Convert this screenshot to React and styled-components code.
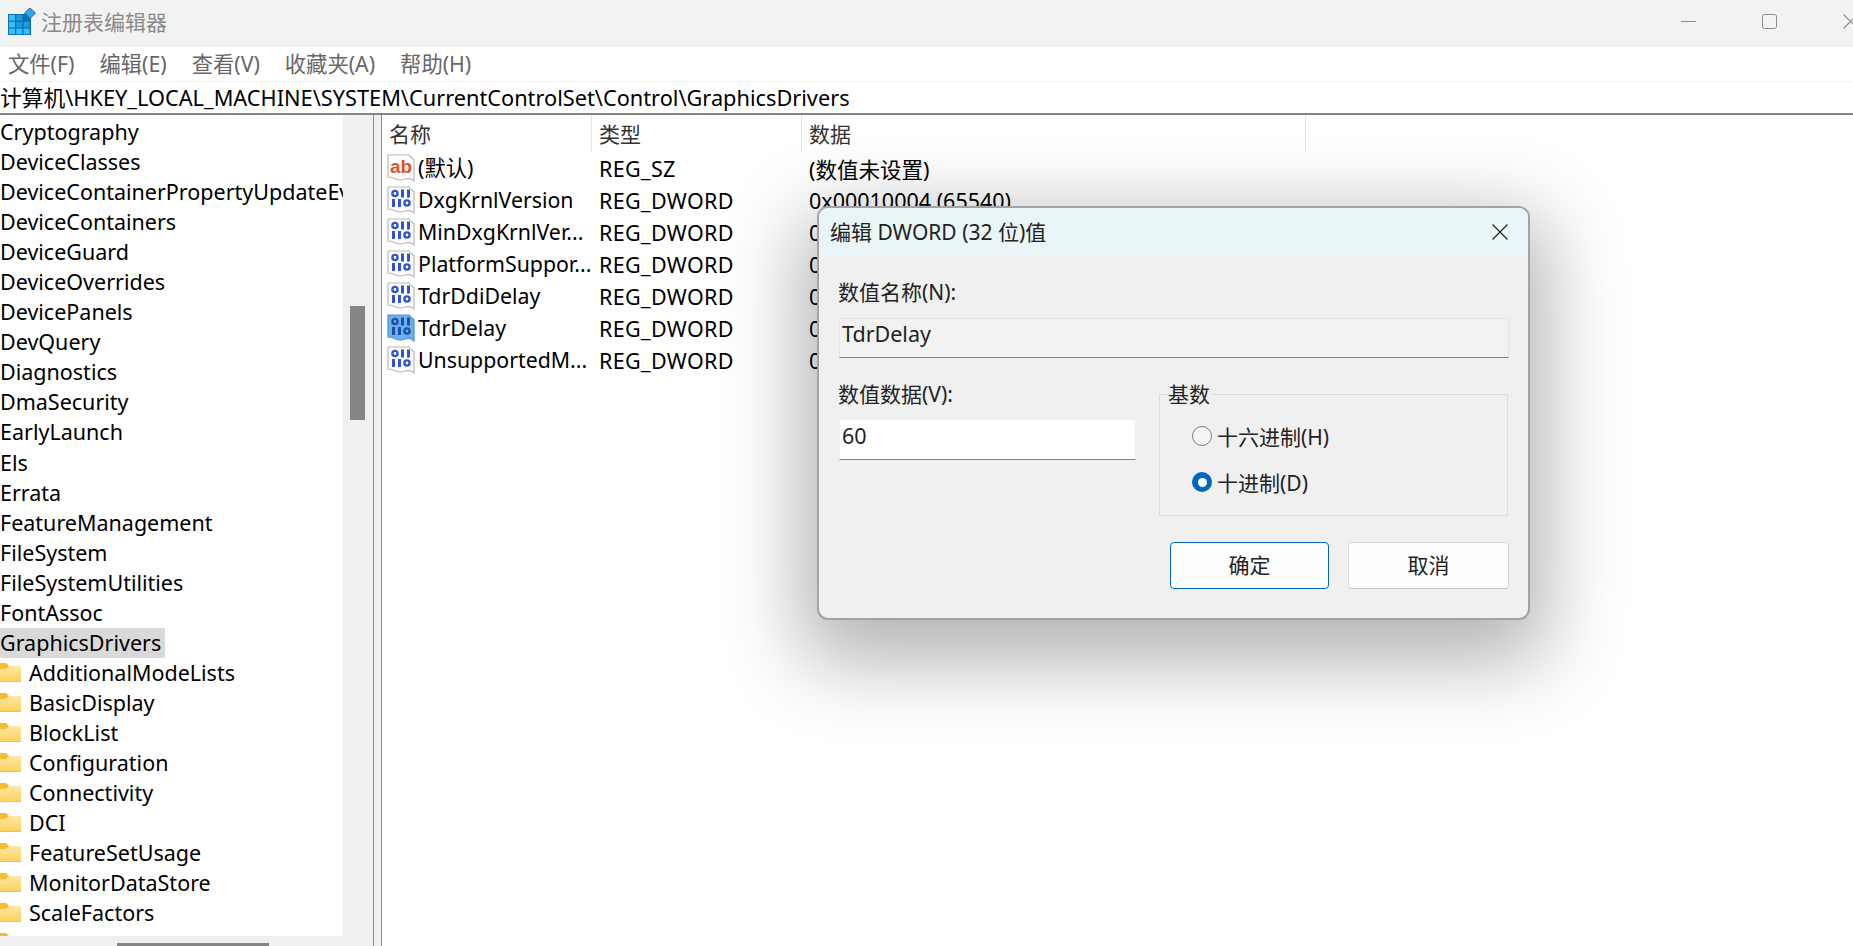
import React from 'react';
import styled, { createGlobalStyle } from 'styled-components';

const UI_FONT = `"Noto Sans", "Noto Sans CJK SC", sans-serif`;

const GlobalStyle = createGlobalStyle`
  html, body {
    margin: 0;
    padding: 0;
    height: 100%;
    overflow: hidden;
    background: #fff;
  }
  #root {
    height: 100%;
  }
`;

const Page = styled.div`
  position: relative;
  display: flex;
  flex-direction: column;
  height: 946px;
  overflow: hidden;
  font-family: ${UI_FONT};
  font-size: 21.5px;
  color: #000;
`;

const TitleBar = styled.div`
  display: flex;
  align-items: center;
  height: 47px;
  flex: none;
  box-sizing: border-box;
  padding: 0 0 5px 8px;
  background: #f2f2f2;
  color: #8a8a8a;
  font-size: 21px;
`;

const AppName = styled.span`
  margin-left: 5px;
  flex: 1;
`;

const WindowButtons = styled.div`
  display: flex;
  align-items: center;
  gap: 66px;
  margin-right: -5px;
`;

const MenuBar = styled.div`
  display: flex;
  align-items: center;
  height: 31px;
  flex: none;
  padding: 0 0 3px 8px;
  box-sizing: content-box;
  gap: 25px;
  margin-bottom: -1px;
  background: #fff;
  border-bottom: 2px solid #f0f0f0;
  color: #666;
  font-size: 21.3px;
`;

const AddressBar = styled.div`
  display: flex;
  align-items: center;
  height: 33px;
  flex: none;
  padding-bottom: 2px;
  box-sizing: border-box;
  background: #fff;
  border-bottom: 2px solid #858585;
  font-size: 21.75px;
  white-space: nowrap;
`;

const Main = styled.div`
  display: flex;
  flex: 1;
  min-height: 0;
`;

const TreePane = styled.div`
  display: flex;
  flex-direction: column;
  width: 343px;
  flex: none;
`;

const TreeList = styled.div`
  flex: 1;
  min-height: 0;
  overflow: hidden;
  padding-top: 2px;
`;

const TreeRow = styled.div`
  display: flex;
  align-items: center;
  width: fit-content;
  height: 30.05px;
  gap: 8px;
  line-height: 28px;
  white-space: nowrap;
  background: ${(p) => (p.$selected ? '#d9d9d9' : 'transparent')};
  border-radius: 0 2px 2px 0;
  padding-right: ${(p) => (p.$selected ? '4px' : '0')};
`;

const HorizontalBar = styled.div`
  display: flex;
  align-items: flex-end;
  height: 10px;
  flex: none;
  background: #f0f0f0;
`;

const HorizontalThumb = styled.div`
  width: 152px;
  height: 3px;
  margin-left: 117px;
  background: #858585;
`;

const VerticalBar = styled.div`
  width: 30px;
  flex: none;
  background: #f0f0f0;
`;

const VerticalThumb = styled.div`
  width: 15px;
  height: 114px;
  margin: 191px 0 0 7px;
  background: #858585;
`;

const Splitter = styled.div`
  width: 7px;
  flex: none;
  background: #f0f0f0;
  border-left: 1px solid #8c8c8c;
  border-right: 1px solid #8c8c8c;
`;

const ValuePane = styled.div`
  flex: 1;
  min-width: 0;
  background: #fff;
`;

const ValueHeader = styled.div`
  display: flex;
  height: 37px;
`;

const HeaderCell = styled.div`
  display: flex;
  align-items: center;
  width: ${(p) => p.$width}px;
  padding: 0 0 1px 7px;
  box-sizing: border-box;
  border-right: 1px solid #e5e5e5;
  color: #333;
  font-size: 21px;
`;

const ValueRow = styled.div`
  display: flex;
  align-items: center;
  height: 32px;
  white-space: nowrap;
`;

const NameCell = styled.div`
  display: flex;
  align-items: center;
  width: 210px;
  gap: 3px;
  padding-left: 5px;
  box-sizing: border-box;
  font-size: 21.3px;
  line-height: 28px;
`;

const DataCell = styled.div`
  width: ${(p) => p.$width}px;
  padding-left: 7px;
  box-sizing: border-box;
  letter-spacing: ${(p) => (p.$spaced ? '0.35px' : '0')};
`;

const Dialog = styled.div`
  position: absolute;
  left: 817px;
  top: 206px;
  width: 713px;
  height: 414px;
  box-sizing: border-box;
  background: #f0f0f0;
  border: 2px solid #a3a3a3;
  border-radius: 11px;
  box-shadow: 0 26px 80px 16px rgba(0, 0, 0, 0.3);
  overflow: hidden;
`;

const DialogTitle = styled.div`
  display: flex;
  align-items: center;
  justify-content: space-between;
  height: 50px;
  box-sizing: border-box;
  padding: 0 20px 2px 11px;
  background: #e9f5f6;
  color: #222;
  font-size: 21px;
`;

const TitleText = styled.span`
  margin-top: -3px;
`;

const DialogBody = styled.div`
  padding: 21px 19px 0 19px;
`;

const FieldLabel = styled.div`
  height: 28px;
  line-height: 26px;
  color: #222;
  font-size: 21px;
`;

const TextBox = styled.div`
  height: ${(p) => (p.$readOnly ? '40px' : '41px')};
  box-sizing: border-box;
  margin: ${(p) => (p.$readOnly ? '11px' : '10px')} 0 0 1px;
  padding-left: 2px;
  line-height: ${(p) => (p.$readOnly ? '29px' : '31px')};
  color: #222;
  background: ${(p) => (p.$readOnly ? '#f2f2f2' : '#fff')};
  border: 1px solid ${(p) => (p.$readOnly ? '#e4e4e4' : '#f2f2f2')};
  border-bottom: 1px solid #808080;
`;

const FieldColumns = styled.div`
  display: grid;
  grid-template-columns: 298px 349px;
  column-gap: 23px;
  margin-top: 23px;
`;

const GroupBox = styled.div`
  position: relative;
  height: 122px;
  box-sizing: border-box;
  margin-top: 13px;
  padding: 18px 0 0 31px;
  border: 1px solid #dcdcdc;
`;

const GroupLegend = styled.span`
  position: absolute;
  left: 8px;
  top: -14px;
  height: 28px;
  line-height: 26px;
  padding-right: 2px;
  background: #f0f0f0;
  color: #222;
  font-size: 21px;
`;

const RadioRow = styled.div`
  display: flex;
  align-items: center;
  height: 46px;
  gap: 5px;
  color: #222;
  font-size: 21px;
`;

const RadioMark = styled.span`
  display: flex;
  align-items: center;
  justify-content: center;
  width: 20px;
  height: 20px;
  margin-left: 1px;
  box-sizing: border-box;
  border-radius: 50%;
  background: ${(p) => (p.$checked ? '#0067c0' : '#f4f4f4')};
  border: ${(p) => (p.$checked ? 'none' : '1.5px solid #7f7f7f')};
  &::after {
    content: '';
    display: ${(p) => (p.$checked ? 'block' : 'none')};
    width: 9px;
    height: 9px;
    border-radius: 50%;
    background: #fff;
  }
`;

const ButtonRow = styled.div`
  display: flex;
  justify-content: flex-end;
  gap: 19px;
  margin-top: 26px;
`;

const DialogButton = styled.button`
  width: ${(p) => p.$width}px;
  height: 47px;
  padding: 0 0 3px;
  background: #fdfdfd;
  border: 1px solid ${(p) => (p.$primary ? '#0067c0' : '#dadada')};
  border-bottom-color: ${(p) => (p.$primary ? '#0067c0' : '#c4c4c4')};
  border-radius: 4px;
  color: #222;
  font-family: inherit;
  font-size: 21px;
`;

const AppIcon = () => (
  <svg width="28" height="28" viewBox="0 0 28 28">
    <rect x="0" y="7" width="23" height="21" fill="#0b6fb8" />
    {[0, 1, 2].map((r) =>
      [0, 1, 2].map((c) => (
        <rect
          key={`${r}${c}`}
          x={1 + c * 7.3}
          y={8 + r * 6.8}
          width="6"
          height="5.6"
          fill={r === 2 || c === 0 ? '#35c1f5' : r === 0 && c === 2 ? '#0b6fb8' : '#1a9be0'}
        />
      ))
    )}
    <path d="M22 1 L27.5 6 L22 11.5 L16.5 6 Z" fill="#2fa7e4" stroke="#0b6fb8" strokeWidth="1" />
  </svg>
);

const MinimizeIcon = () => (
  <svg width="15" height="15" viewBox="0 0 15 15">
    <path d="M0 7.5H15" stroke="#8a8a8a" strokeWidth="1" />
  </svg>
);

const MaximizeIcon = () => (
  <svg width="15" height="15" viewBox="0 0 15 15">
    <rect x="0.5" y="0.5" width="14" height="14" rx="2" fill="none" stroke="#8a8a8a" strokeWidth="1" />
  </svg>
);

const CloseIcon = ({ size = 15, color = '#8a8a8a' }) => (
  <svg width={size} height={size} viewBox="0 0 15 15">
    <path d="M0.5 0.5L14.5 14.5M14.5 0.5L0.5 14.5" stroke={color} strokeWidth="1.1" />
  </svg>
);

const FolderIcon = () => (
  <svg width="21" height="30" viewBox="0 0 21 30" style={{ flex: 'none' }}>
    <defs>
      <linearGradient id="folderFill" x1="0" y1="0" x2="0" y2="1">
        <stop offset="0" stopColor="#ffedb5" />
        <stop offset="1" stopColor="#fbd05a" />
      </linearGradient>
    </defs>
    <path d="M0 5H6L9 8H21V24H0Z" fill="url(#folderFill)" />
    <path d="M0 5H6L9 8L6 11H0Z" fill="#f6bd34" />
    <path d="M0 23.5H21V24H0Z" fill="#e9b13c" />
  </svg>
);

// page with the turned corner and the wavy bottom edge used by both value icons
const PageShape = ({ selected }) => (
  <path
    d="M1 1H22L27 6V27Q23 23 18 25T9 25T1 23Z"
    fill={selected ? '#6cb0ea' : '#fdfdfd'}
    stroke={selected ? '#4a94d8' : '#b9b9b9'}
    strokeWidth="1.2"
  />
);

const StringIcon = () => (
  <svg width="28" height="28" viewBox="0 0 28 28" style={{ flex: 'none' }}>
    <PageShape />
    <text x="3" y="19" fontFamily="Liberation Sans, sans-serif" fontSize="19" fontWeight="700" fill="#e0512c">
      ab
    </text>
  </svg>
);

const BinaryIcon = ({ selected }) => {
  const ink = selected ? '#1d4fa8' : '#2f52d8';
  return (
    <svg width="28" height="28" viewBox="0 0 28 28" style={{ flex: 'none' }}>
      <PageShape selected={selected} />
      <ellipse cx="8" cy="7.5" rx="2.6" ry="2.6" fill="none" stroke={ink} strokeWidth="2.4" />
      <rect x="14" y="3.5" width="3" height="8" fill={ink} />
      <rect x="20" y="3.5" width="3" height="8" fill={ink} />
      <rect x="5" y="13" width="3" height="8" fill={ink} />
      <rect x="11" y="13" width="3" height="8" fill={ink} />
      <ellipse cx="20" cy="17" rx="2.6" ry="2.6" fill="none" stroke={ink} strokeWidth="2.4" />
    </svg>
  );
};

const MENU_ITEMS = ['文件(F)', '编辑(E)', '查看(V)', '收藏夹(A)', '帮助(H)'];

const TREE_KEYS = [
  'Cryptography',
  'DeviceClasses',
  'DeviceContainerPropertyUpdateEvents',
  'DeviceContainers',
  'DeviceGuard',
  'DeviceOverrides',
  'DevicePanels',
  'DevQuery',
  'Diagnostics',
  'DmaSecurity',
  'EarlyLaunch',
  'Els',
  'Errata',
  'FeatureManagement',
  'FileSystem',
  'FileSystemUtilities',
  'FontAssoc',
];

const SUB_KEYS = [
  'AdditionalModeLists',
  'BasicDisplay',
  'BlockList',
  'Configuration',
  'Connectivity',
  'DCI',
  'FeatureSetUsage',
  'MonitorDataStore',
  'ScaleFactors',
  '',
];

const VALUES = [
  { name: '(默认)', type: 'REG_SZ', data: '(数值未设置)', string: true },
  { name: 'DxgKrnlVersion', type: 'REG_DWORD', data: '0x00010004 (65540)' },
  { name: 'MinDxgKrnlVer...', type: 'REG_DWORD', data: '0' },
  { name: 'PlatformSuppor...', type: 'REG_DWORD', data: '0' },
  { name: 'TdrDdiDelay', type: 'REG_DWORD', data: '0' },
  { name: 'TdrDelay', type: 'REG_DWORD', data: '0', selected: true },
  { name: 'UnsupportedM...', type: 'REG_DWORD', data: '0' },
];

const App = () => (
  <Page>
    <GlobalStyle />
    <TitleBar>
      <AppIcon />
      <AppName>注册表编辑器</AppName>
      <WindowButtons>
        <MinimizeIcon />
        <MaximizeIcon />
        <CloseIcon />
      </WindowButtons>
    </TitleBar>

    <MenuBar>
      {MENU_ITEMS.map((item) => (
        <span key={item}>{item}</span>
      ))}
    </MenuBar>

    <AddressBar>计算机\HKEY_LOCAL_MACHINE\SYSTEM\CurrentControlSet\Control\GraphicsDrivers</AddressBar>

    <Main>
      <TreePane>
        <TreeList>
          {TREE_KEYS.map((key) => (
            <TreeRow key={key}>{key}</TreeRow>
          ))}
          <TreeRow $selected>GraphicsDrivers</TreeRow>
          {SUB_KEYS.map((key) => (
            <TreeRow key={key || 'clipped'}>
              <FolderIcon />
              {key}
            </TreeRow>
          ))}
        </TreeList>
        <HorizontalBar>
          <HorizontalThumb />
        </HorizontalBar>
      </TreePane>
      <VerticalBar>
        <VerticalThumb />
      </VerticalBar>
      <Splitter />

      <ValuePane>
        <ValueHeader>
          <HeaderCell $width={210}>名称</HeaderCell>
          <HeaderCell $width={210}>类型</HeaderCell>
          <HeaderCell $width={504}>数据</HeaderCell>
        </ValueHeader>
        {VALUES.map((value) => (
          <ValueRow key={value.name}>
            <NameCell>
              {value.string ? <StringIcon /> : <BinaryIcon selected={value.selected} />}
              <span>{value.name}</span>
            </NameCell>
            <DataCell $width={210} $spaced>{value.type}</DataCell>
            <DataCell $width={504}>{value.data}</DataCell>
          </ValueRow>
        ))}
      </ValuePane>
    </Main>

    <Dialog>
      <DialogTitle>
        <TitleText>编辑 DWORD (32 位)值</TitleText>
        <CloseIcon size={16} color="#222" />
      </DialogTitle>
      <DialogBody>
        <FieldLabel>数值名称(N):</FieldLabel>
        <TextBox $readOnly>TdrDelay</TextBox>
        <FieldColumns>
          <div>
            <FieldLabel>数值数据(V):</FieldLabel>
            <TextBox>60</TextBox>
          </div>
          <GroupBox>
            <GroupLegend>基数</GroupLegend>
            <RadioRow>
              <RadioMark />
              十六进制(H)
            </RadioRow>
            <RadioRow>
              <RadioMark $checked />
              十进制(D)
            </RadioRow>
          </GroupBox>
        </FieldColumns>
        <ButtonRow>
          <DialogButton $primary $width={159}>确定</DialogButton>
          <DialogButton $width={161}>取消</DialogButton>
        </ButtonRow>
      </DialogBody>
    </Dialog>
  </Page>
);

export default App;
